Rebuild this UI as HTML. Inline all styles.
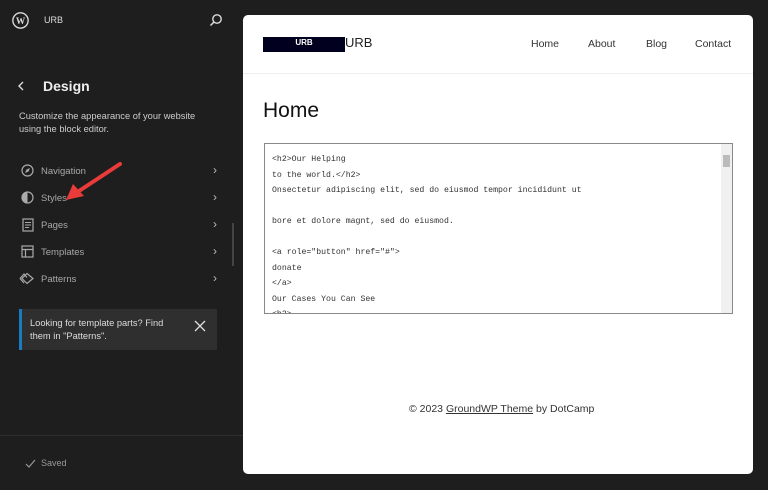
<!DOCTYPE html>
<html><head><meta charset="utf-8"><style>
*{margin:0;padding:0;box-sizing:border-box}
body{width:768px;height:490px;background:#1e1e1e;font-family:"Liberation Sans",sans-serif;position:relative;overflow:hidden;color:#e0e0e0}
.a{position:absolute}
.nav{font-size:9.5px;color:#a8a8a8}
.chev{color:#bbb;font-size:12px}
.frame{left:243px;top:15px;width:510px;height:459px;background:#fff;border-radius:5px;overflow:hidden}
.mono{font-family:"Liberation Mono",monospace;font-size:8.2px;color:#333}
</style></head><body>
<svg class="a" style="left:12px;top:12px" width="17" height="17" viewBox="0 0 20 20"><circle cx="10" cy="10" r="9" fill="none" stroke="#ddd" stroke-width="1.6"/><text x="10" y="14" font-size="11" font-family="Liberation Serif" font-weight="bold" text-anchor="middle" fill="#ddd">W</text></svg>
<div class="a" style="left:44px;top:15px;font-size:9px;color:#ddd">URB</div>
<svg class="a" style="left:209px;top:13px" width="14" height="14" viewBox="0 0 14 14"><circle cx="8" cy="6" r="4.2" fill="none" stroke="#ddd" stroke-width="1.4"/><path d="M5 9 L1.5 12.5" stroke="#ddd" stroke-width="1.5"/></svg>
<svg class="a" style="left:17px;top:81px" width="8" height="10"><path d="M6 1 L2 5 L6 9" fill="none" stroke="#ddd" stroke-width="1.4"/></svg>
<div class="a" style="left:43px;top:78px;font-size:14px;color:#eee;font-weight:bold">Design</div>
<div class="a" style="left:19px;top:110px;font-size:9.3px;line-height:13px;color:#ccc;width:200px">Customize the appearance of your website using the block editor.</div>

<svg class="a" style="left:21px;top:164px" width="13" height="13"><circle cx="6.5" cy="6.5" r="5.5" fill="none" stroke="#aaa" stroke-width="1.2"/><path d="M4 9 L5.5 5.5 L9 4 L7.5 7.5Z" fill="#aaa"/></svg>
<div class="a nav" style="left:41px;top:166px">Navigation</div>
<svg class="a" style="left:21px;top:191px" width="13" height="13"><circle cx="6.5" cy="6.5" r="5.5" fill="none" stroke="#aaa" stroke-width="1.2"/><path d="M6.5 1 A5.5 5.5 0 0 0 6.5 12Z" fill="#aaa"/></svg>
<div class="a nav" style="left:41px;top:193px">Styles</div>
<svg class="a" style="left:22px;top:218px" width="12" height="14"><rect x="1" y="1" width="10" height="12" fill="none" stroke="#aaa" stroke-width="1.2"/><path d="M3 4.5h6M3 7h6M3 9.5h4" stroke="#aaa"/></svg>
<div class="a nav" style="left:41px;top:220px">Pages</div>
<svg class="a" style="left:21px;top:245px" width="13" height="13"><rect x="1" y="1" width="11" height="11" fill="none" stroke="#aaa" stroke-width="1.2"/><path d="M1 4.5h11M4.5 4.5v7.5" stroke="#aaa" stroke-width="1.2"/></svg>
<div class="a nav" style="left:41px;top:247px">Templates</div>
<svg class="a" style="left:19px;top:272px" width="16" height="13"><path d="M1 6.5 L5 2 L8 5.5 M5 11 L1 6.5 M8 1.5 L14 6.5 L8 11.5 L3 6.5Z" fill="none" stroke="#aaa" stroke-width="1.2"/></svg>
<div class="a nav" style="left:41px;top:274px">Patterns</div>
<div class="a chev" style="left:213px;top:163px">›</div>
<div class="a chev" style="left:213px;top:190px">›</div>
<div class="a chev" style="left:213px;top:217px">›</div>
<div class="a chev" style="left:213px;top:244px">›</div>
<div class="a chev" style="left:213px;top:271px">›</div>
<div class="a" style="left:232px;top:223px;width:2px;height:43px;background:#444"></div>
<svg class="a" style="left:62px;top:160px" width="62" height="44"><path d="M58 4 L14 33" stroke="#ea3b3b" stroke-width="4" stroke-linecap="round"/><path d="M4 40 L11 24 L22 36Z" fill="#ea3b3b"/></svg>

<div class="a" style="left:19px;top:309px;width:198px;height:41px;background:#2f2f2f;border-left:3px solid #1b7bc0"></div>
<div class="a" style="left:30px;top:317px;font-size:9.3px;line-height:12.5px;color:#ddd;width:150px">Looking for template parts? Find them in "Patterns".</div>
<svg class="a" style="left:194px;top:320px" width="12" height="12"><path d="M1 1L11 11M11 1L1 11" stroke="#ddd" stroke-width="1.3"/></svg>
<div class="a" style="left:0;top:435px;width:243px;height:1px;background:#2e2e2e"></div>
<svg class="a" style="left:25px;top:459px" width="11" height="9"><path d="M1 5 L4 8 L10 1" fill="none" stroke="#999" stroke-width="1.2"/></svg>
<div class="a" style="left:41px;top:458px;font-size:9px;color:#999">Saved</div>

<div class="a frame">
 <div class="a" style="left:20px;top:22px;width:82px;height:15px;background:#02001f;color:#fff;font-size:8px;font-weight:bold;text-align:center;line-height:11px">URB</div>
 <div class="a" style="left:102px;top:20px;font-size:13px;color:#222">URB</div>
 <div class="a" style="left:288px;top:23px;font-size:10.5px;color:#333">Home</div>
 <div class="a" style="left:345px;top:23px;font-size:10.5px;color:#333">About</div>
 <div class="a" style="left:403px;top:23px;font-size:10.5px;color:#333">Blog</div>
 <div class="a" style="left:452px;top:23px;font-size:10.5px;color:#333">Contact</div>
 <div class="a" style="left:0;top:58px;width:510px;height:1px;background:#eee"></div>
 <div class="a" style="left:20px;top:84px;font-size:21px;color:#111">Home</div>
 <div class="a" style="left:21px;top:128px;width:469px;height:171px;border:1px solid #888;overflow:hidden">
  <div class="a mono" style="left:7px;top:8px;line-height:15.5px;white-space:pre">&lt;h2&gt;Our Helping
to the world.&lt;/h2&gt;
Onsectetur adipiscing elit, sed do eiusmod tempor incididunt ut

bore et dolore magnt, sed do eiusmod.

&lt;a role="button" href="#"&gt;
donate
&lt;/a&gt;
Our Cases You Can See
&lt;h2&gt;</div>
  <div class="a" style="right:0;top:0;width:11px;height:169px;background:#f0f0f0"></div>
  <div class="a" style="right:2px;top:11px;width:7px;height:12px;background:#bbb"></div>
 </div>
 <div class="a" style="left:166px;top:388px;font-size:10.5px;color:#333">© 2023 <span style="text-decoration:underline">GroundWP Theme</span> by DotCamp</div>
</div>
</body></html>
